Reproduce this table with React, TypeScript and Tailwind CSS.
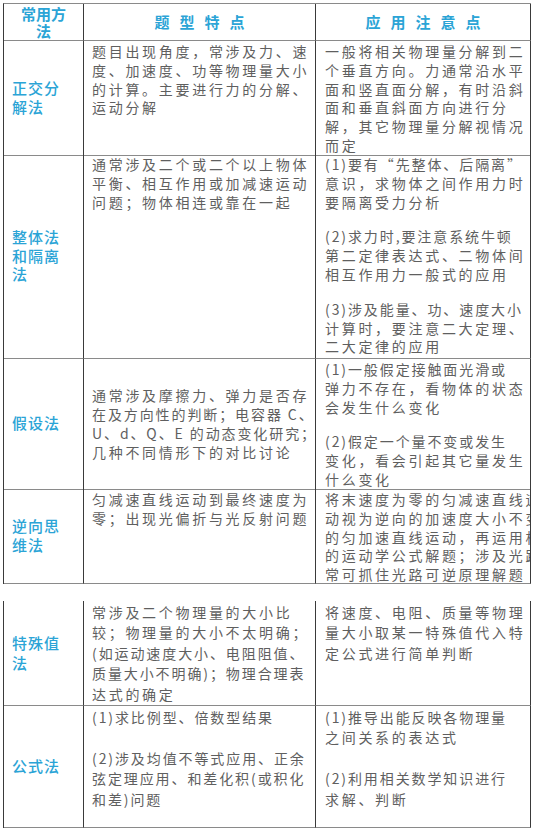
import clsx from 'clsx';

type Row = {
  label: string[];
  mid: string[][];
  right: string[][];
  height: string;
  midCenter?: boolean;
  clipRight?: boolean;
};

const partOne: Row[] = [
  {
    label: ['正交分', '解法'],
    mid: [['题目出现角度，常涉及力、速', '度、加速度、功等物理量大小', '的计算。主要进行力的分解、', '运动分解']],
    right: [['一般将相关物理量分解到二', '个垂直方向。力通常沿水平', '面和竖直面分解，有时沿斜', '面和垂直斜面方向进行分', '解，其它物理量分解视情况', '而定']],
    height: 'h-[113px]',
  },
  {
    label: ['整体法', '和隔离', '法'],
    mid: [['通常涉及二个或二个以上物体', '平衡、相互作用或加减速运动', '问题；物体相连或靠在一起']],
    right: [
      ['(1)要有“先整体、后隔离”', '意识，求物体之间作用力时', '要隔离受力分析'],
      ['(2)求力时,要注意系统牛顿', '第二定律表达式、二物体间', '相互作用力一般式的应用'],
      ['(3)涉及能量、功、速度大小', '计算时，要注意二大定理、', '二大定律的应用'],
    ],
    height: 'h-[205px]',
  },
  {
    label: ['假设法'],
    mid: [['通常涉及摩擦力、弹力是否存', '在及方向性的判断；电容器 C、', 'U、d、Q、E 的动态变化研究；', '几种不同情形下的对比讨论']],
    right: [
      ['(1)一般假定接触面光滑或', '弹力不存在，看物体的状态', '会发生什么变化'],
      ['(2)假定一个量不变或发生', '变化，看会引起其它量发生', '什么变化'],
    ],
    height: 'h-[130px]',
    midCenter: true,
  },
  {
    label: ['逆向思', '维法'],
    mid: [['匀减速直线运动到最终速度为', '零；出现光偏折与光反射问题']],
    right: [['将末速度为零的匀减速直线运', '动视为逆向的加速度大小不变', '的匀加速直线运动，再运用相', '的运动学公式解题；涉及光路', '常可抓住光路可逆原理解题']],
    height: 'h-[95px]',
    clipRight: true,
  },
];

const partTwo: Row[] = [
  {
    label: ['特殊值', '法'],
    mid: [['常涉及二个物理量的大小比', '较；物理量的大小不太明确；', '(如运动速度大小、电阻阻值、', '质量大小不明确)；物理合理表', '达式的确定']],
    right: [['将速度、电阻、质量等物理', '量大小取某一特殊值代入特', '定公式进行简单判断']],
    height: 'h-[105px]',
  },
  {
    label: ['公式法'],
    mid: [['(1)求比例型、倍数型结果'], ['(2)涉及均值不等式应用、正余', '弦定理应用、和差化积(或积化', '和差)问题']],
    right: [['(1)推导出能反映各物理量', '之间关系的表达式'], ['(2)利用相关数学知识进行', '求解、判断']],
    height: 'h-[122px]',
  },
];

const cellBase =
  'border-r-[1.5px] border-b-[1.5px] border-r-[#3a3a3a] border-b-[#8a8a8a] whitespace-nowrap';

// lines holding latin letters or brackets run wider, so they get tighter spacing
const tight = (line: string) => /[A-Za-z()]/.test(line);

function TextCell({ paras, gap, className }: { paras: string[][]; gap: string; className?: string }) {
  return (
    <div className={clsx(cellBase, 'text-[14px] text-[#5f5f5f]', className)}>
      {paras.map((p, i) => (
        <div key={i} className={i > 0 ? gap : ''}>
          {p.map((line, j) => (
            <div key={j} className={tight(line) ? 'tracking-[1.9px]' : 'tracking-[2.7px]'}>
              {line}
            </div>
          ))}
        </div>
      ))}
    </div>
  );
}

function Rows({ rows, leading, gap, pad }: { rows: Row[]; leading: string; gap: string; pad: string }) {
  return (
    <>
      {rows.map((row, i) => (
        <div key={i} className={clsx('grid grid-cols-[80px_232px_215px]', row.height, leading)}>
          {/* method name */}
          <div
            className={clsx(
              cellBase,
              'flex flex-col justify-center pl-[8px] text-[15px] tracking-[1px] font-medium text-[#2ba4d6]'
            )}
          >
            {row.label.map((l, j) => (
              <div key={j}>{l}</div>
            ))}
          </div>
          <TextCell
            paras={row.mid}
            gap={gap}
            className={clsx('pl-[8px]', row.midCenter ? 'flex flex-col justify-center' : pad)}
          />
          <TextCell
            paras={row.right}
            gap={gap}
            className={clsx('pl-[9px]', pad, row.clipRight && 'overflow-hidden')}
          />
        </div>
      ))}
    </>
  );
}

export default function App() {
  return (
    <div className="w-[545px] h-[832px] bg-white pt-[3px] pl-[3px] font-['Noto_Sans_CJK_SC',sans-serif]">
      {/* first page of the table */}
      <div className="w-fit border-l-[1.5px] border-t-[1.5px] border-l-[#3a3a3a] border-t-[#8a8a8a]">
        <div className="grid grid-cols-[80px_232px_215px] h-[37px] font-bold text-[#2ba4d6]">
          <div className={clsx(cellBase, 'flex flex-col items-center justify-center text-[15px] leading-[17px]')}>
            <div>常用方</div>
            <div>法</div>
          </div>
          <div className={clsx(cellBase, 'flex items-center justify-center text-[15px] tracking-[10px] pl-[10px]')}>
            题型特点
          </div>
          <div className={clsx(cellBase, 'flex items-center justify-center text-[15px] tracking-[10px] pl-[10px]')}>
            应用注意点
          </div>
        </div>
        <Rows rows={partOne} leading="leading-[18.8px]" gap="mt-[16px]" pad="pt-[1px]" />
      </div>

      {/* continued after page break */}
      <div className="mt-[17px] w-fit border-l-[1.5px] border-l-[#3a3a3a]">
        <Rows rows={partTwo} leading="leading-[20.5px]" gap="mt-[20.5px]" pad="pt-[0.5px]" />
      </div>
    </div>
  );
}
